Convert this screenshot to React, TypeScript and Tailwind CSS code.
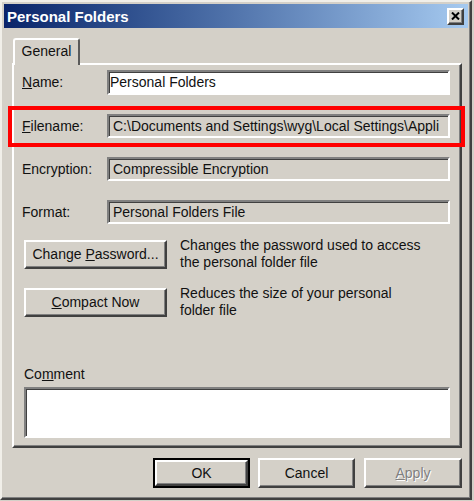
import React from "react";

const sunken =
  "border-2 border-t-[#808080] border-l-[#808080] border-b-white border-r-white shadow-[inset_1px_1px_0_#404040]";
const raised =
  "border-2 border-t-white border-l-white border-b-[#404040] border-r-[#404040] shadow-[inset_-1px_-1px_0_#808080] bg-[#d4d0c8]";

function Field({
  label,
  value,
  white,
  h,
  first,
}: {
  label: React.ReactNode;
  value: string;
  white?: boolean;
  h: string;
  first?: boolean;
}) {
  return (
    <div className={`flex items-center ${first ? "" : "mt-[19px]"}`}>
      <div className="w-[85px] shrink-0">{label}</div>
      <div
        className={`flex-1 ${h} ${sunken} ${
          white ? "bg-white pl-[1px]" : "bg-[#d4d0c8] pl-[4px]"
        } flex items-center overflow-hidden whitespace-nowrap`}
      >
        {value}
      </div>
    </div>
  );
}

export default function App() {
  return (
    <div className="relative w-[474px] h-[501px] overflow-hidden bg-[#d4d0c8] font-['Liberation_Sans',Arial,sans-serif] text-[14px] text-[#111]">
      <div className="w-[472px] h-[500px] border-2 border-t-[#f1efe9] border-l-[#f1efe9] border-r-[#404040] border-b-[#404040] shadow-[inset_-1px_-1px_0_#808080] p-[2px] flex flex-col">
        {/* Title bar */}
        <div className="h-[24px] shrink-0 flex items-center justify-between bg-linear-to-r from-[#0a246a] to-[#a6caf0] pl-[3px] pr-[4px]">
          <span className="text-white font-bold text-[15px] leading-none">
            Personal Folders
          </span>
          <div
            className={`w-[17px] h-[17px] ${raised} flex items-center justify-center`}
          >
            <svg width="9" height="8" viewBox="0 0 9 8">
              <path
                d="M1 0.5 L8 7.5 M8 0.5 L1 7.5"
                stroke="#000"
                strokeWidth="2"
                fill="none"
              />
            </svg>
          </div>
        </div>

        {/* Body */}
        <div className="flex flex-col pl-[8px] pr-[6px] pt-[10px]">
          {/* Tab */}
          <div className="relative z-10 ml-[1px] -mb-[2px] w-[67px] h-[27px] border-2 border-b-0 border-t-white border-l-white border-r-[#5a5a5a] rounded-t-[3px] bg-[#d4d0c8] flex items-start justify-center pt-[3px]">
            <span className="leading-[17px]">General</span>
          </div>

          {/* Panel */}
          <div className="h-[385px] border-2 border-t-white border-l-white border-r-[#404040] border-b-[#404040] shadow-[inset_-1px_-1px_0_#808080] flex flex-col pl-[8px] pr-[10px] pt-[5px] pb-[8px]">
            <Field
              first
              label={
                <span>
                  <u>N</u>ame:
                </span>
              }
              value="Personal Folders"
              white
              h="h-[25px]"
            />
            <Field
              label={
                <span>
                  <u>F</u>ilename:
                </span>
              }
              value="C:\Documents and Settings\wyg\Local Settings\Appli"
              h="h-[24px]"
            />
            <Field
              label={<span>Encryption:</span>}
              value="Compressible Encryption"
              h="h-[24px]"
            />
            <Field
              label={<span>Format:</span>}
              value="Personal Folders File"
              h="h-[24px]"
            />

            <div className="mt-[13px] ml-[2px] flex items-center">
              <div
                className={`w-[143px] h-[29px] shrink-0 ${raised} flex items-center justify-center`}
              >
                <span>
                  Change <u>P</u>assword...
                </span>
              </div>
              <div className="ml-[13px] leading-[17px]">
                Changes the password used to access
                <br />
                the personal folder file
              </div>
            </div>

            <div className="mt-[14px] ml-[2px] flex items-center">
              <div
                className={`w-[143px] h-[29px] shrink-0 ${raised} flex items-center justify-center`}
              >
                <span>
                  <u>C</u>ompact Now
                </span>
              </div>
              <div className="ml-[13px] leading-[17px]">
                Reduces the size of your personal
                <br />
                folder file
              </div>
            </div>

            <div className="flex-1" />
            <div className="ml-[2px] leading-[17px]">
              Co<u>m</u>ment
            </div>
            <div className={`mt-[4px] ml-[2px] h-[51px] bg-white ${sunken}`} />
          </div>

          {/* Bottom buttons */}
          <div className="mt-[10px] flex justify-end">
            <div className="w-[97px] h-[30px] border-2 border-black">
              <div
                className={`w-full h-full ${raised} flex items-center justify-center`}
              >
                OK
              </div>
            </div>
            <div
              className={`ml-[8px] w-[97px] h-[30px] ${raised} flex items-center justify-center`}
            >
              Cancel
            </div>
            <div
              className={`ml-[9px] w-[98px] h-[30px] ${raised} flex items-center justify-center text-[#808080] [text-shadow:1px_1px_0_#fff]`}
            >
              <span>
                <u>A</u>pply
              </span>
            </div>
          </div>
        </div>
      </div>

      {/* Red highlight annotation */}
      <div className="absolute left-[8px] top-[106px] w-[457px] h-[41px] border-4 border-[#ff0000] pointer-events-none" />
    </div>
  );
}
